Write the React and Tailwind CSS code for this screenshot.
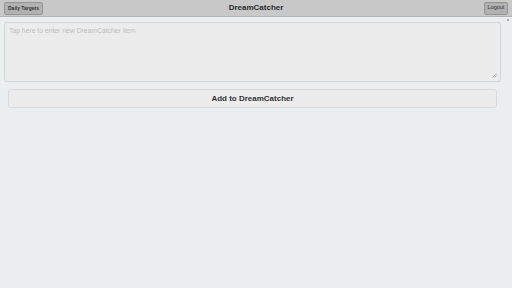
export default function App() {
  return (
    <div className="w-[512px] h-[288px] bg-[#eaeeee] overflow-hidden" style={{ fontFamily: '"Liberation Sans", Arial, sans-serif' }}>
      <div className="h-[17px] bg-[#c8c8c8] border-b border-[#b3b3b3] flex items-center justify-between px-[4px] relative">
        <button className="h-[13px] px-0 bg-[#b1b1b1] border border-[#959595] rounded-[2px] text-[5px] font-bold text-[#333] leading-none w-[39px] whitespace-nowrap">Daily Targets</button>
        <div className="absolute left-0 right-0 top-0 h-[16px] flex items-center justify-center pointer-events-none">
          <span className="text-[8px] font-bold text-[#2a2a2a]">DreamCatcher</span>
        </div>
        <button className="h-[13px] px-0 bg-[#b1b1b1] border border-[#959595] rounded-[2px] text-[5.5px] text-[#333] leading-none w-[24px] whitespace-nowrap">Logout</button>
      </div>
      <div className="px-[4px] pt-[5px] pr-[11px] relative">
        <div className="h-[60px] w-[497px] bg-[#ececec] border border-[#d4d6d6] rounded-[3px] relative">
          <div className="pl-[4px] pt-[3px] text-[6.8px] text-[#bdbdbd] whitespace-nowrap">Tap here to enter new DreamCatcher item</div>
          <svg className="absolute right-[3px] bottom-[3px]" width="5" height="5" viewBox="0 0 5 5">
            <path d="M4.5 0.5 L0.5 4.5 M4.5 2.5 L2.5 4.5" stroke="#999" strokeWidth="0.8" />
          </svg>
        </div>
        <div className="absolute right-[3px] top-[2px] w-[2px] h-[2px] bg-[#aaa]"></div>
      </div>
      <div className="pl-[8px] pt-[7px]">
        <div className="w-[489px] h-[19px] bg-[#ececec] border border-[#dadada] rounded-[3px] flex items-center justify-center text-[8px] font-bold text-[#333]">
          Add to DreamCatcher
        </div>
      </div>
    </div>
  );
}
